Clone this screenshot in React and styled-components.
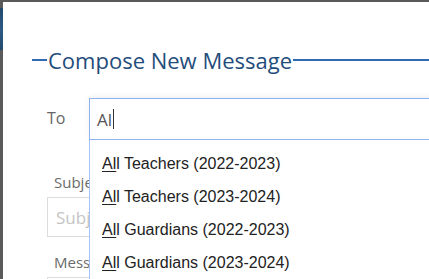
import React from "react";
import styled, { createGlobalStyle } from "styled-components";

const GlobalStyle = createGlobalStyle`
  html, body {
    margin: 0;
    padding: 0;
    height: 100%;
    overflow: hidden;
  }
  body {
    background: #5a5a5a;
    font-family: "Open Sans", "Liberation Sans", sans-serif;
  }
`;

const Page = styled.div`
  display: flex;
  height: 279px;
  width: 429px;
  overflow: hidden;
  background: linear-gradient(
    to bottom,
    #5a5a5a 0,
    #5a5a5a 8px,
    #244a6e 8px,
    #2c5a84 30px,
    #244a6e 50px,
    #5a5a5a 50px
  );
`;

const Modal = styled.div`
  flex: 1;
  min-width: 0;
  margin: 2px 0 0 3px;
  background: #fff;
  padding-top: 43px;
  position: relative;
  overflow: hidden;
`;

const TitleRow = styled.div`
  display: flex;
  align-items: center;
  height: 30px;
  padding-left: 29px;
`;

const Rule = styled.div`
  height: 2px;
  background: #2e6bb3;
  width: ${(p) => (p.$short ? "15px" : "auto")};
  flex: ${(p) => (p.$short ? "none" : "1")};
`;

const Title = styled.h2`
  margin: 0 1px;
  font-family: "Open Sans", sans-serif;
  font-weight: 400;
  font-size: 22px;
  line-height: 30px;
  color: #1f4d7c;
  white-space: nowrap;
`;

const Form = styled.div`
  padding-left: 44px;
  margin-top: 23px;
`;

const ToRow = styled.div`
  display: flex;
  align-items: center;
`;

const ToLabel = styled.label`
  flex: none;
  width: 42px;
  font-size: 16px;
  color: #666;
  margin-top: -2px;
`;

const ToField = styled.div`
  position: relative;
  width: 380px;
  flex: none;
`;

const ToInput = styled.div`
  box-sizing: border-box;
  height: 42px;
  border: 1px solid #90b4f2;
  border-right: none;
  box-shadow: 0 -2px 6px rgba(0, 0, 0, 0.06);
  display: flex;
  align-items: center;
  padding-left: 7px;
  font-size: 17px;
  color: #555;
`;

const Caret = styled.span`
  display: inline-block;
  width: 1px;
  height: 20px;
  background: #333;
  margin-left: 1px;
`;

const Dropdown = styled.ul`
  position: absolute;
  top: 100%;
  left: 0;
  right: 0;
  margin: 0;
  padding: 7px 0 0;
  list-style: none;
  background: #fff;
  border-left: 1px solid #a5c3f5;
  z-index: 2;
  height: 200px;
`;

const Option = styled.li`
  height: 33px;
  line-height: 33px;
  padding-left: 12px;
  font-family: "Liberation Sans", Arial, sans-serif;
  font-size: 16px;
  color: #222;
  white-space: nowrap;

  & u {
    text-decoration-thickness: 1px;
    text-underline-offset: 2px;
  }
`;

const Group = styled.div`
  margin-top: ${(p) => p.$top}px;
`;

const FieldLabel = styled.div`
  padding-left: 7px;
  font-size: 15px;
  line-height: 20px;
  color: #6b6b6b;
`;

const Box = styled.div`
  box-sizing: border-box;
  margin-top: 5px;
  width: 370px;
  height: 40px;
  border: 1px solid #dcdcdc;
  display: flex;
  align-items: center;
  padding-left: 8px;
  font-size: 17px;
  color: #c4c4c4;
`;

const options = [
  "Teachers (2022-2023)",
  "Teachers (2023-2024)",
  "Guardians (2022-2023)",
  "Guardians (2023-2024)",
];

export default function App() {
  return (
    <Page>
      <GlobalStyle />
      <Modal>
        <TitleRow>
          <Rule $short />
          <Title>Compose New Message</Title>
          <Rule />
        </TitleRow>
        <Form>
          <ToRow>
            <ToLabel>To</ToLabel>
            <ToField>
              <ToInput>
                Al
                <Caret />
              </ToInput>
              <Dropdown>
                {options.map((o) => (
                  <Option key={o}>
                    <u>Al</u>l {o}
                  </Option>
                ))}
              </Dropdown>
            </ToField>
          </ToRow>
          <Group $top={32}>
            <FieldLabel>Subject</FieldLabel>
            <Box>Subject</Box>
          </Group>
          <Group $top={15}>
            <FieldLabel>Message</FieldLabel>
            <Box />
          </Group>
        </Form>
      </Modal>
    </Page>
  );
}
